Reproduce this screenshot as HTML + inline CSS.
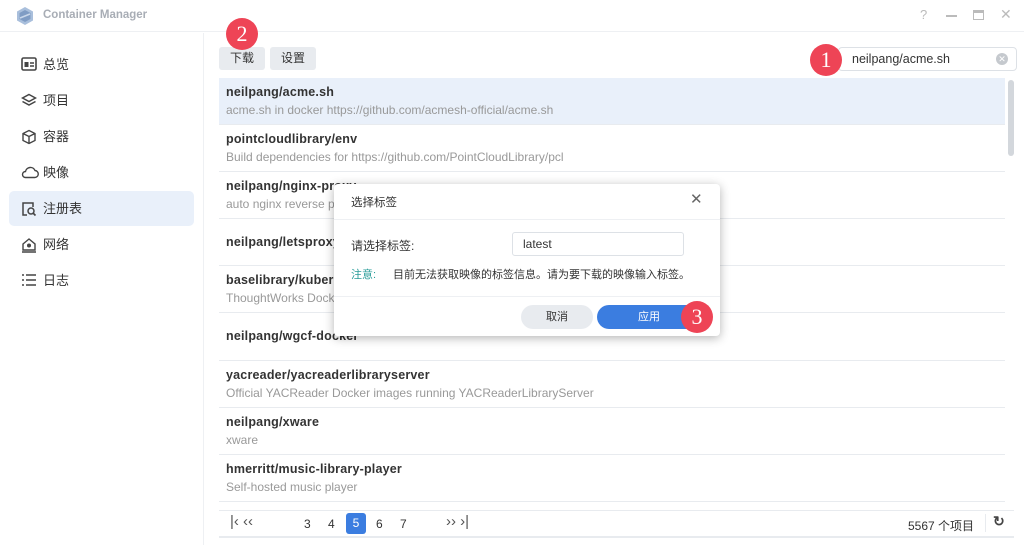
<!DOCTYPE html><html><head><meta charset="utf-8"><style>
*{box-sizing:border-box;margin:0;padding:0}
body{width:1024px;height:545px;overflow:hidden;background:#fff;font-family:"Liberation Sans","Noto Sans CJK SC",sans-serif;position:relative;color:#333}
.abs{position:absolute}
.hdr{left:0;top:0;width:1024px;height:32px;border-bottom:1px solid #eef0f3}
.side{left:0;top:33px;width:204px;height:512px;border-right:1px solid #eef0f3}
.nav{position:absolute;left:9px;width:185px;height:35px;border-radius:5px;font-size:13px;color:#333;line-height:35px;padding-left:34px}
.nav svg{position:absolute;left:12px;top:10px}
.btn{top:47px;height:23px;background:#e8ebef;border-radius:3px;font-size:12px;line-height:23px;text-align:center;color:#333}
.row{position:absolute;left:219px;width:786px;height:47px;border-bottom:1px solid #e8ebef;padding-left:7px}
.row b{display:block;font-size:12.5px;color:#333;margin-top:7px;letter-spacing:.2px}
.row span{display:block;font-size:12px;color:#999;margin-top:4px}
.row.one b{margin-top:16px}
.badge{width:32px;height:32px;border-radius:50%;background:#ee4456;color:#fff;font-family:"Liberation Serif",serif;font-size:22px;text-align:center;line-height:32px}
.pg{top:514px;font-size:12px;color:#333}
</style></head><body>
<div class="abs hdr">
<svg class="abs" style="left:15px;top:6px" width="20" height="20" viewBox="0 0 20 20"><polygon points="10,1 18,5.5 18,14.5 10,19 2,14.5 2,5.5" fill="#a9bfdc"/><polygon points="10,4 15.5,7 15.5,13 10,16 4.5,13 4.5,7" fill="#7f9cc4"/><path d="M5 12 L15 8" stroke="#c9d7ea" stroke-width="1.5"/></svg>
<div class="abs" style="left:43px;top:9px;font-size:11.5px;font-weight:bold;color:#a8adb5">Container Manager</div>
<div class="abs" style="left:920px;top:7px;font-size:13px;color:#bbb">?</div>
<div class="abs" style="left:946px;top:15px;width:11px;height:1.5px;background:#bbb"></div>
<div class="abs" style="left:973px;top:10px;width:11px;height:10px;border:1.5px solid #bbb;border-top-width:3px"></div>
<div class="abs" style="left:1000px;top:6px;font-size:14px;color:#bbb">✕</div>
</div>
<div class="abs side">
<div class="nav" style="top:14px"><svg width="16" height="14" viewBox="0 0 16 14"><rect x="1" y="1" width="14" height="12" rx="1.5" fill="none" stroke="#444" stroke-width="1.6"/><rect x="3.5" y="5" width="4" height="5" fill="#444"/><path d="M9 6h4M9 9h4" stroke="#444" stroke-width="1.4"/></svg>总览</div>
<div class="nav" style="top:50px"><svg width="16" height="16" viewBox="0 0 16 16"><path d="M8 1.5L14.5 5 8 8.5 1.5 5z M1.5 8.5L8 12 14.5 8.5" fill="none" stroke="#444" stroke-width="1.5"/></svg>项目</div>
<div class="nav" style="top:86px"><svg width="16" height="16" viewBox="0 0 16 16"><path d="M8 1.5L14 4.5V11.5L8 14.5 2 11.5V4.5z M2 4.5L8 7.5 14 4.5 M8 7.5V14.5" fill="none" stroke="#444" stroke-width="1.4"/></svg>容器</div>
<div class="nav" style="top:122px"><svg width="18" height="14" viewBox="0 0 18 14"><path d="M4.5 12.5h9a3.5 3.5 0 0 0 .5-7 5 5 0 0 0-9.5 1 3 3 0 0 0 0 6z" fill="none" stroke="#444" stroke-width="1.4"/></svg>映像</div>
<div class="nav" style="top:158px;background:#e9f0fa"><svg width="16" height="16" viewBox="0 0 16 16"><path d="M6 14H2V2h10v4" fill="none" stroke="#444" stroke-width="1.5"/><circle cx="10" cy="10" r="3" fill="none" stroke="#444" stroke-width="1.5"/><path d="M12 12l2.5 2.5" stroke="#444" stroke-width="1.6"/></svg>注册表</div>
<div class="nav" style="top:194px"><svg width="16" height="16" viewBox="0 0 16 16"><path d="M2 7L8 2l6 5v6H2z" fill="none" stroke="#444" stroke-width="1.4"/><circle cx="8" cy="8.5" r="2" fill="#444"/><path d="M1 15h14" stroke="#444" stroke-width="1.5"/></svg>网络</div>
<div class="nav" style="top:230px"><svg width="16" height="14" viewBox="0 0 16 14"><path d="M1 2h2M1 7h2M1 12h2M5 2h10M5 7h10M5 12h10" stroke="#444" stroke-width="1.6"/></svg>日志</div>
</div>
<div class="abs btn" style="left:219px;width:46px">下载</div>
<div class="abs btn" style="left:270px;width:46px">设置</div>
<div class="abs badge" style="left:226px;top:18px">2</div>
<div class="abs" style="left:838px;top:47px;width:179px;height:24px;border:1px solid #dde1e6;border-radius:4px;font-size:12.5px;line-height:22px;padding-left:13px;color:#333">neilpang/acme.sh<div class="abs" style="right:8px;top:5px;width:12px;height:12px;border-radius:50%;background:#c5c9ce;color:#fff;font-size:9px;line-height:12px;text-align:center">✕</div></div>
<div class="abs badge" style="left:810px;top:44px">1</div>
<div class="row" style="top:78px;background:#e9f0fa"><b>neilpang/acme.sh</b><span>acme.sh in docker https://github.com/acmesh-official/acme.sh</span></div>
<div class="row" style="top:125px"><b>pointcloudlibrary/env</b><span>Build dependencies for https://github.com/PointCloudLibrary/pcl</span></div>
<div class="row" style="top:172px"><b>neilpang/nginx-proxy</b><span>auto nginx reverse proxy</span></div>
<div class="row one" style="top:219px"><b>neilpang/letsproxy</b></div>
<div class="row" style="top:266px"><b>baselibrary/kubernetes</b><span>ThoughtWorks Docker image</span></div>
<div class="row one" style="top:313px;height:48px"><b>neilpang/wgcf-docker</b></div>
<div class="row" style="top:361px"><b>yacreader/yacreaderlibraryserver</b><span>Official YACReader Docker images running YACReaderLibraryServer</span></div>
<div class="row" style="top:408px"><b>neilpang/xware</b><span>xware</span></div>
<div class="row" style="top:455px"><b>hmerritt/music-library-player</b><span>Self-hosted music player</span></div>
<div class="abs" style="left:1008px;top:80px;width:6px;height:76px;border-radius:3px;background:#d3d7dc"></div>
<div class="abs" style="left:219px;top:510px;width:795px;height:1px;background:#e8ebef"></div>
<div class="abs" style="left:219px;top:536px;width:795px;height:2px;background:#e8ebef"></div>
<div class="abs pg" style="left:230px;top:513px;font-size:15px;color:#555">|‹ ‹‹</div>
<div class="abs pg" style="left:304px;top:517px">3</div>
<div class="abs pg" style="left:328px;top:517px">4</div>
<div class="abs" style="left:346px;top:513px;width:20px;height:21px;border-radius:3px;background:#3b7de0;color:#fff;font-size:12px;text-align:center;line-height:21px">5</div>
<div class="abs pg" style="left:376px;top:517px">6</div>
<div class="abs pg" style="left:400px;top:517px">7</div>
<div class="abs pg" style="left:446px;top:513px;font-size:15px;color:#555">›› ›|</div>
<div class="abs pg" style="left:908px;top:517px">5567 个项目</div>
<div class="abs" style="left:985px;top:514px;width:1px;height:18px;background:#e8ebef"></div>
<div class="abs pg" style="left:993px;top:513px;font-size:14px;font-weight:bold;color:#444">↻</div>
<div class="abs" style="left:334px;top:184px;width:386px;height:152px;background:#fff;border-radius:4px;box-shadow:0 2px 10px rgba(0,0,0,.3)">
<div class="abs" style="left:17px;top:10px;font-size:11.5px;color:#333">选择标签</div>
<div class="abs" style="left:356px;top:6px;font-size:15px;color:#666">✕</div>
<div class="abs" style="left:0;top:35px;width:386px;height:1px;background:#eef0f3"></div>
<div class="abs" style="left:17px;top:53px;font-size:12px">请选择标签:</div>
<div class="abs" style="left:178px;top:48px;width:172px;height:24px;border:1px solid #dde1e6;border-radius:3px;font-size:12px;line-height:22px;padding-left:10px">latest</div>
<div class="abs" style="left:17px;top:82px;font-size:11px;color:#2a9d9a">注意:</div>
<div class="abs" style="left:59px;top:82px;font-size:11px;color:#333">目前无法获取映像的标签信息。请为要下载的映像输入标签。</div>
<div class="abs" style="left:0;top:112px;width:386px;height:1px;background:#eef0f3"></div>
<div class="abs" style="left:187px;top:121px;width:72px;height:24px;border-radius:12px;background:#e8ebef;font-size:11px;text-align:center;line-height:24px">取消</div>
<div class="abs" style="left:263px;top:121px;width:104px;height:24px;border-radius:12px;background:#3b7de0;color:#fff;font-size:11px;text-align:center;line-height:24px">应用</div>
</div>
<div class="abs badge" style="left:681px;top:301px">3</div>
</body></html>
